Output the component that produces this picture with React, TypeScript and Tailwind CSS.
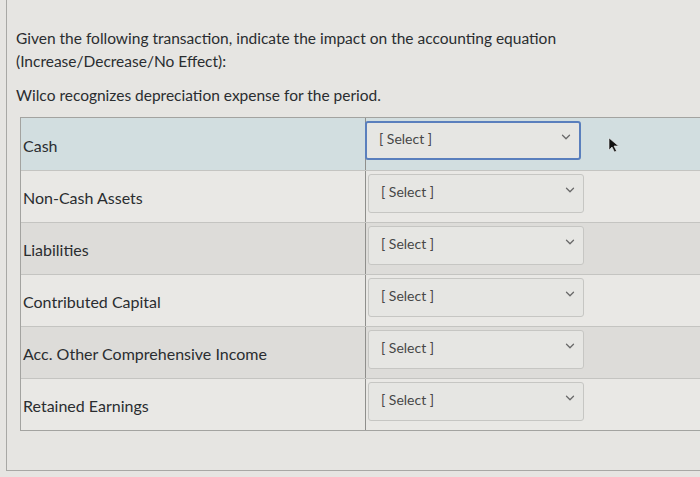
import { ChevronDown } from 'lucide-react';

const ROWS = [
  { label: 'Cash', bg: 'bg-[#d2dee0]', focused: true },
  { label: 'Non-Cash Assets', bg: 'bg-[#e9e8e5]' },
  { label: 'Liabilities', bg: 'bg-[#dddcd9]' },
  { label: 'Contributed Capital', bg: 'bg-[#e9e8e5]' },
  { label: 'Acc. Other Comprehensive Income', bg: 'bg-[#dddcd9]' },
  { label: 'Retained Earnings', bg: 'bg-[#e9e8e5]' },
];

export default function App() {
  return (
    <div
      className="relative h-[477px] w-[700px] overflow-hidden bg-[#e6e5e2] text-[#2a2d30]"
      style={{ fontFamily: 'Lato, "Open Sans", sans-serif' }}
    >
      <div className="ml-[6px] h-[471px] border-b border-l border-[#a8a8a5] pl-[9px] pt-[27px]">
        <p className="text-[15.5px] leading-[23px]">
          Given the following transaction, indicate the impact on the accounting equation
          <br />
          (Increase/Decrease/No Effect):
        </p>
        <p className="mt-[11px] text-[15.5px] leading-[23px]">
          Wilco recognizes depreciation expense for the period.
        </p>

        <div className="mt-[10px] ml-[4px] border-t border-l border-b border-[#a3a3a0]">
          {ROWS.map((r, i) => (
            <div
              key={r.label}
              className={`flex h-[52px] ${r.bg} ${i > 0 ? 'border-t border-[#c4c4c1]' : ''}`}
            >
              <div className="flex w-[344px] shrink-0 items-end pb-[12px] pl-[2px] text-[16px]">
                {r.label}
              </div>
              <div className="flex-1 border-l border-[#8f8f8c] pt-[3px]">
                <div
                  className={`flex h-[39px] w-[216px] items-center justify-between rounded-[3px] bg-[#e6e6e3] pl-[12px] pr-[6px] text-[14px] text-[#474747] ${
                    r.focused
                      ? '-ml-px border-2 border-[#5a7fbd]'
                      : 'ml-[2px] border border-[#c6c6c3]'
                  }`}
                >
                  <span className="-mt-[4px]">[ Select ]</span>
                  <ChevronDown size={14} strokeWidth={2.2} className="-mt-[8px] text-[#6a6a6a]" />
                </div>
              </div>
            </div>
          ))}
        </div>
      </div>

      {/* mouse pointer */}
      <svg
        className="absolute left-[608px] top-[137px]"
        width="12"
        height="16"
        viewBox="0 0 12 16"
      >
        <path d="M1 1 L1 13 L4 10 L6.5 15 L8.5 14 L6 9 L10.5 9 Z" fill="#111" stroke="#eee" strokeWidth="0.6" />
      </svg>
    </div>
  );
}
